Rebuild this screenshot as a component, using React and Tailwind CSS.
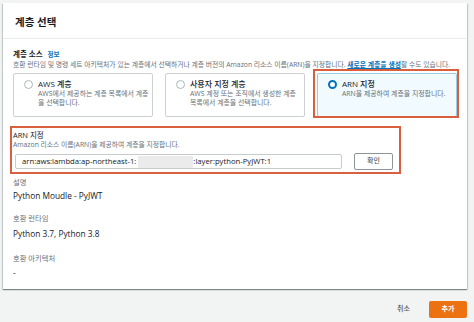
import React from "react";

function Radio({ checked }) {
  if (checked) {
    return (
      <span className="mt-[1px] box-border inline-block h-[9px] w-[9px] shrink-0 rounded-full border-[2.5px] border-[#0073bb] bg-white" />
    );
  }
  return (
    <span className="mt-[1px] box-border inline-block h-[9px] w-[9px] shrink-0 rounded-full border border-[#aab7b8] bg-white" />
  );
}

function Tile({ title, desc, checked }) {
  return (
    <div
      className={
        "relative box-border h-[44px] rounded-[2px] border pl-[10px] pr-[4px] pt-[5px] " +
        (checked ? "border-[#9ccbe6] bg-[#f1faff]" : "border-[#ccd0d0] bg-white")
      }
    >
      <div className="flex items-start gap-[5px]">
        <Radio checked={checked} />
        <div>
          <div className="text-[8px] font-medium leading-[10px] text-[#16191f]">{title}</div>
          <div className="whitespace-nowrap text-[6.9px] leading-[9px] text-[#687078]">{desc}</div>
        </div>
      </div>
      {checked && (
        <div className="pointer-events-none absolute left-[-5px] top-[-5px] right-[-3px] bottom-[-2px] border-2 border-[#d9603f]" />
      )}
    </div>
  );
}

export default function App() {
  return (
    <div className="h-[322px] w-[474px] overflow-hidden bg-[#f2f3f3] pl-[3px] pt-[3px] font-['Open_Sans','Noto_Sans_CJK_KR',sans-serif] text-[#16191f]">
      <div className="box-border h-[286px] w-[464px] bg-white shadow-[0_1px_1px_0_rgba(0,28,36,0.3),1px_1px_1px_0_rgba(0,28,36,0.15),-1px_1px_1px_0_rgba(0,28,36,0.15)]">
        <div className="box-border flex h-[36px] items-center border-b border-[#eaeded] px-[12px] pt-[3px]">
          <h2 className="text-[10.5px] font-bold leading-[12px] text-[#16191f]">계층 선택</h2>
        </div>
        <div className="px-[10px] pt-[10px]">
          <div className="flex items-baseline gap-[5px] leading-[10px]">
            <span className="text-[7.5px] font-bold text-[#16191f]">계층 소스</span>
            <span className="text-[6.5px] font-bold text-[#0073bb]">정보</span>
          </div>
          <div className="whitespace-nowrap text-[6.8px] leading-[10px] text-[#687078]">
            호환 런타임 및 명령 세트 아키텍처가 있는 계층에서 선택하거나 계층 버전의 Amazon 리소스 이름(ARN)을 지정합니다.{" "}
            <span className="font-bold text-[#0073bb] underline">새로운 계층을 생성</span>할 수도 있습니다.
          </div>
          <div className="mt-[3px] grid grid-cols-[140px_140px_140px] gap-[12px]">
            <Tile title="AWS 계층" desc={<>AWS에서 제공하는 계층 목록에서 계층<br />을 선택합니다.</>} />
            <Tile title="사용자 지정 계층" desc={<>AWS 계정 또는 조직에서 생성한 계층<br />목록에서 계층을 선택합니다.</>} />
            <Tile title="ARN 지정" desc="ARN을 제공하여 계층을 지정합니다." checked />
          </div>

          <div className="relative mt-[13px]">
            <div className="text-[7.5px] leading-[10px] text-[#16191f]">ARN 지정</div>
            <div className="text-[6.8px] leading-[10px] text-[#687078]">Amazon 리소스 이름(ARN)을 제공하여 계층을 지정합니다.</div>
            <div className="mt-[3px] flex items-center gap-[12px]">
              <div className="ml-[2px] box-border flex h-[15px] w-[327px] items-center overflow-hidden whitespace-nowrap rounded-[2px] border border-[#c6cbcb] pl-[6px] text-[7.7px] text-[#16191f]">
                <span>arn:aws:lambda:ap-northeast-1:</span>
                <span className="ml-[2px] inline-block h-[12px] w-[55px] bg-[#ebebeb]" />
                <span>:layer:python-PyJWT:1</span>
              </div>
              <button className="box-border flex h-[17px] w-[39px] items-center justify-center rounded-[2px] border border-[#8d9696] bg-white text-[7px] font-medium text-[#545b64]">
                확인
              </button>
            </div>
            <div className="pointer-events-none absolute left-[-3px] top-[-4px] h-[48px] w-[391px] border-2 border-[#d9603f]" />
          </div>

          <div className="mt-[7px] text-[7.3px] leading-[10px] text-[#687078]">설명</div>
          <div className="mt-[3px] text-[8.3px] font-medium leading-[12px] text-[#16191f]">Python Moudle - PyJWT</div>
          <div className="mt-[11px] text-[7.3px] leading-[10px] text-[#687078]">호환 런타임</div>
          <div className="mt-[5px] text-[8.3px] font-medium leading-[12px] text-[#16191f]">Python 3.7, Python 3.8</div>
          <div className="mt-[13px] text-[7.3px] leading-[10px] text-[#687078]">호환 아키텍처</div>
          <div className="mt-[4px] text-[8.3px] font-medium leading-[12px] text-[#16191f]">-</div>
        </div>
      </div>
      <div className="mt-[12px] flex w-[464px] items-center justify-end gap-[19px]">
        <span className="text-[7px] font-medium text-[#545b64]">취소</span>
        <button className="box-border flex h-[17px] w-[38px] items-center justify-center rounded-[2px] bg-[#ec7211] text-[7px] font-bold text-white">
          추가
        </button>
      </div>
    </div>
  );
}
